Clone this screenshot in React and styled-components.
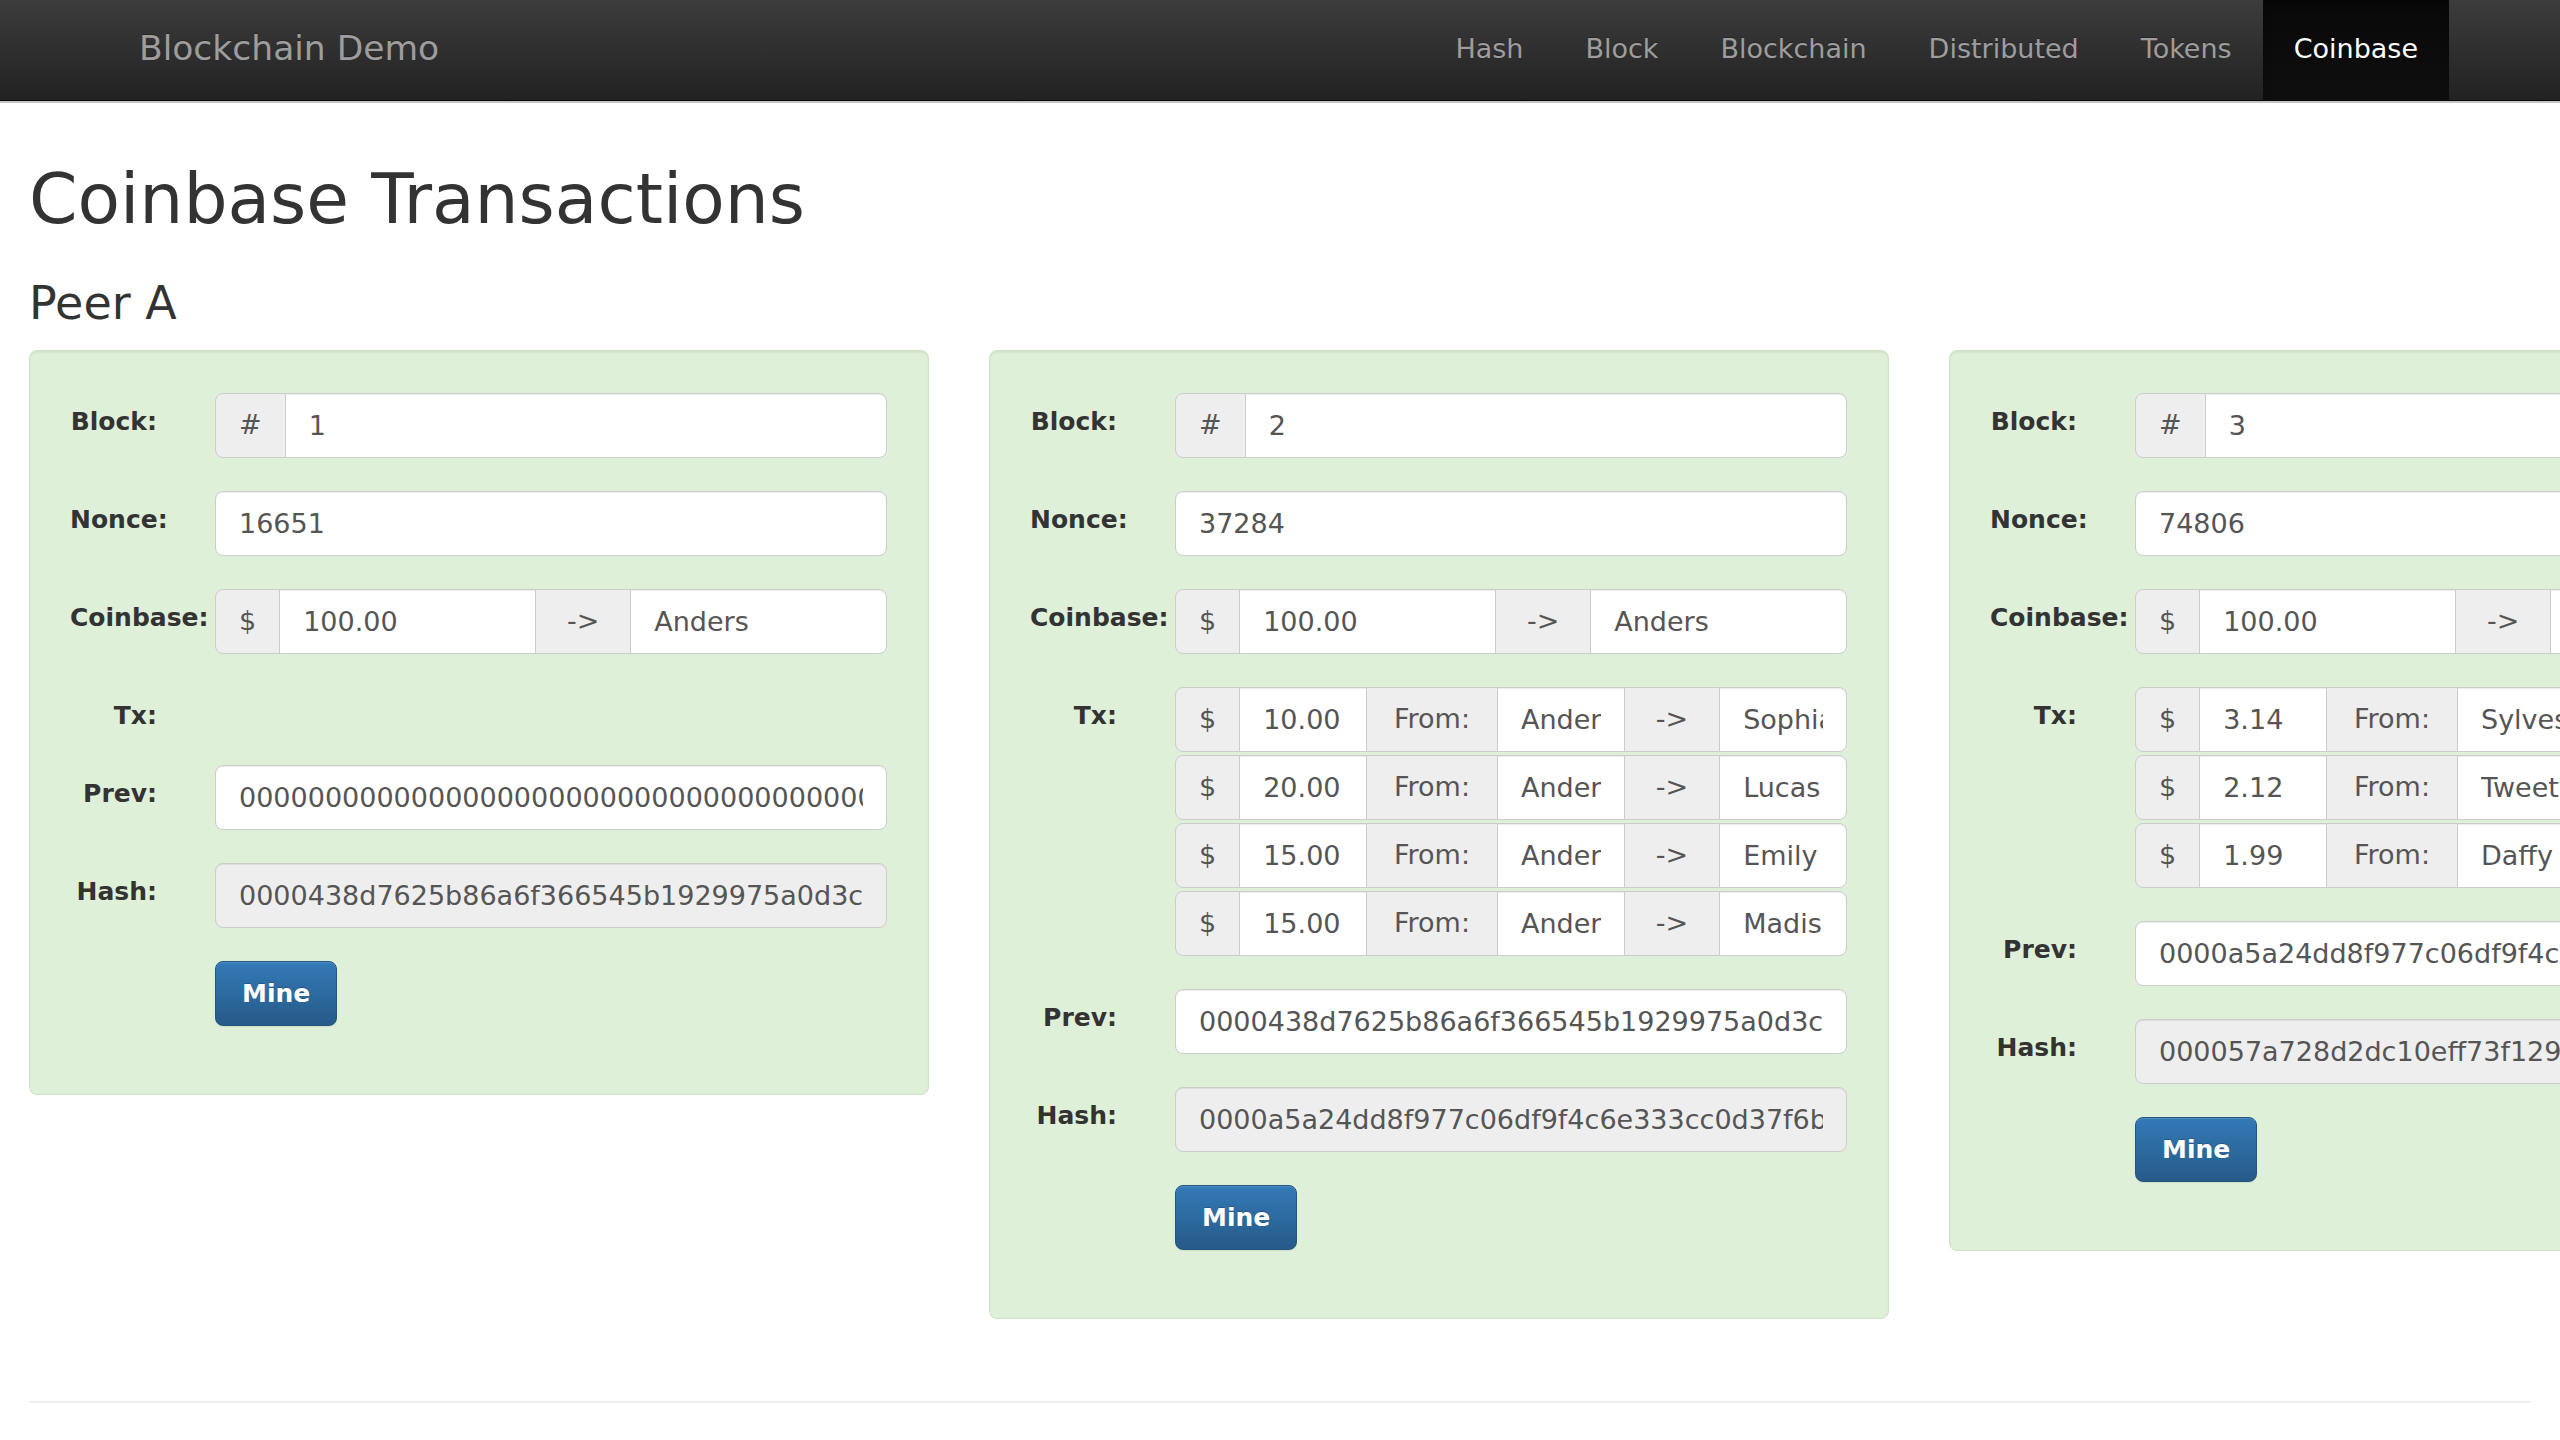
import React from "react";
import styled, { createGlobalStyle } from "styled-components";

const GlobalStyle = createGlobalStyle`
  * {
    box-sizing: border-box;
  }
  body {
    margin: 0;
    background: #fff;
    color: #333;
    font-family: "DejaVu Sans", "Liberation Sans", sans-serif;
    font-size: 27px;
    line-height: 1.43;
    overflow-x: hidden;
  }
`;

const Navbar = styled.nav`
  height: 101px;
  background: linear-gradient(to bottom, #3c3c3c 0%, #222 100%);
  border-bottom: 1px solid #080808;
  box-shadow: 0 2px 0 #c4c4c4;
`;

const NavInner = styled.div`
  display: flex;
  justify-content: space-between;
  height: 100%;
  padding: 0 111px 0 110px;
`;

const Brand = styled.a`
  display: flex;
  align-items: center;
  padding: 0 29px 2px;
  color: #9d9d9d;
  font-size: 34.5px;
  text-decoration: none;
  text-shadow: 0 -1px 0 rgba(0, 0, 0, 0.25);
`;

const NavList = styled.ul`
  display: flex;
  margin: 0;
  padding: 0;
  list-style: none;
`;

const NavItem = styled.li`
  display: flex;
  align-items: center;
  padding: 0 31px 2px;
  color: ${(p) => (p.$active ? "#fff" : "#9d9d9d")};
  background: ${(p) =>
    p.$active ? "linear-gradient(to bottom, #080808 0%, #0f0f0f 100%)" : "none"};
  box-shadow: ${(p) => (p.$active ? "inset 0 3px 9px rgba(0, 0, 0, 0.25)" : "none")};
  text-shadow: 0 -1px 0 rgba(0, 0, 0, 0.25);
  cursor: pointer;
`;

const Main = styled.main`
  padding: 0 29px;
`;

const Title = styled.h1`
  margin: 60px 0 0;
  font-size: 69.5px;
  font-weight: 500;
  line-height: 1.1;
`;

const PeerHeading = styled.h3`
  margin: 41px 0 21px;
  font-size: 46px;
  font-weight: 500;
  line-height: 1.1;
`;

const BlockRow = styled.div`
  display: flex;
  align-items: flex-start;
  gap: 60px;
  margin-right: -29px;
  overflow: hidden;
`;

const Well = styled.form`
  flex: none;
  width: 900px;
  padding: 42px 41px 68px 40px;
  background: #dff0d8;
  border: 1px solid #cfe1c4;
  border-radius: 8px;
  box-shadow: inset 0 2px 2px rgba(0, 0, 0, 0.05);
`;

const FormRow = styled.div`
  display: grid;
  grid-template-columns: 87px minmax(0, 1fr);
  column-gap: 58px;
  margin-bottom: 33px;

  &:last-child {
    margin-bottom: 0;
  }
`;

const Label = styled.label`
  padding-top: 10px;
  font-size: 25px;
  font-weight: bold;
  line-height: 38px;
  text-align: right;
  white-space: nowrap;
  height: 45px;
`;

const Group = styled.div`
  display: flex;
  min-width: 0;
  height: 65px;

  & > * + * {
    margin-left: -1px;
  }
  & > :first-child {
    border-radius: 8px 0 0 8px;
  }
  & > :last-child {
    border-radius: 0 8px 8px 0;
  }
  & > :only-child {
    border-radius: 8px;
  }
`;

const Addon = styled.span`
  flex: none;
  display: flex;
  align-items: center;
  padding: 0 ${(p) => p.$pad || 23}px;
  background: #eee;
  border: 1px solid #ccc;
  color: #555;
  white-space: nowrap;
`;

const Field = styled.input`
  flex: 1 1 0;
  width: 0;
  min-width: 0;
  height: 65px;
  padding: 0 23px;
  border: 1px solid #ccc;
  background: ${(p) => (p.$locked ? "#eee" : "#fff")};
  color: #555;
  font-family: inherit;
  font-size: 27px;
  box-shadow: inset 0 1px 1px rgba(0, 0, 0, 0.075);
  outline: none;
`;

const TxStack = styled.div`
  display: flex;
  flex-direction: column;
  gap: 3px;
  min-width: 0;
  min-height: 45px;
`;

const MineButton = styled.button`
  justify-self: start;
  height: 65px;
  padding: 0 26px;
  border: 1px solid #245580;
  border-radius: 8px;
  background: linear-gradient(to bottom, #337ab7 0%, #265a88 100%);
  color: #fff;
  font-family: inherit;
  font-size: 25px;
  font-weight: bold;
  text-shadow: 0 -1px 0 rgba(0, 0, 0, 0.2);
  box-shadow: inset 0 1px 0 rgba(255, 255, 255, 0.15), 0 1px 1px rgba(0, 0, 0, 0.075);
  cursor: pointer;
`;

const Rule = styled.hr`
  margin: 82px 0 0;
  border: 0;
  border-top: 2px solid #eee;
`;

const ZERO = "0".repeat(64);

const blocks = [
  {
    id: 1,
    nonce: "16651",
    coinbase: { amount: "100.00", to: "Anders" },
    txs: [],
    prev: ZERO,
    hash: "0000438d7625b86a6f366545b1929975a0d3c7e1f0b2a94d8e6c5b3a1f907e2d",
  },
  {
    id: 2,
    nonce: "37284",
    coinbase: { amount: "100.00", to: "Anders" },
    txs: [
      { amount: "10.00", from: "Anders", to: "Sophia" },
      { amount: "20.00", from: "Anders", to: "Lucas" },
      { amount: "15.00", from: "Anders", to: "Emily" },
      { amount: "15.00", from: "Anders", to: "Madison" },
    ],
    prev: "0000438d7625b86a6f366545b1929975a0d3c7e1f0b2a94d8e6c5b3a1f907e2d",
    hash: "0000a5a24dd8f977c06df9f4c6e333cc0d37f6b1e8a45c9d20f7e3b6a18c4d52",
  },
  {
    id: 3,
    nonce: "74806",
    coinbase: { amount: "100.00", to: "Anders" },
    txs: [
      { amount: "3.14", from: "Sylvester", to: "Tweety" },
      { amount: "2.12", from: "Tweety", to: "Daffy" },
      { amount: "1.99", from: "Daffy", to: "Bugs" },
    ],
    prev: "0000a5a24dd8f977c06df9f4c6e333cc0d37f6b1e8a45c9d20f7e3b6a18c4d52",
    hash: "000057a728d2dc10eff73f129b4e6a0c83d1f5e72a9c04b6d8e13f7a25c960eb",
  },
];

const navLinks = ["Hash", "Block", "Blockchain", "Distributed", "Tokens", "Coinbase"];

const TxLine = ({ tx }) => (
  <Group>
    <Addon>$</Addon>
    <Field readOnly value={tx.amount} />
    <Addon $pad={27}>From:</Addon>
    <Field readOnly value={tx.from} />
    <Addon $pad={31}>-&gt;</Addon>
    <Field readOnly value={tx.to} />
  </Group>
);

const BlockCard = ({ block }) => (
  <Well onSubmit={(e) => e.preventDefault()}>
    <FormRow>
      <Label>Block:</Label>
      <Group>
        <Addon>#</Addon>
        <Field readOnly value={block.id} />
      </Group>
    </FormRow>
    <FormRow>
      <Label>Nonce:</Label>
      <Group>
        <Field readOnly value={block.nonce} />
      </Group>
    </FormRow>
    <FormRow>
      <Label>Coinbase:</Label>
      <Group>
        <Addon>$</Addon>
        <Field readOnly value={block.coinbase.amount} />
        <Addon $pad={31}>-&gt;</Addon>
        <Field readOnly value={block.coinbase.to} />
      </Group>
    </FormRow>
    <FormRow>
      <Label>Tx:</Label>
      <TxStack>
        {block.txs.map((tx, i) => (
          <TxLine key={i} tx={tx} />
        ))}
      </TxStack>
    </FormRow>
    <FormRow>
      <Label>Prev:</Label>
      <Group>
        <Field readOnly value={block.prev} />
      </Group>
    </FormRow>
    <FormRow>
      <Label>Hash:</Label>
      <Group>
        <Field readOnly $locked value={block.hash} />
      </Group>
    </FormRow>
    <FormRow>
      <span />
      <MineButton type="button">Mine</MineButton>
    </FormRow>
  </Well>
);

export default function App() {
  return (
    <>
      <GlobalStyle />
      <Navbar>
        <NavInner>
          <Brand href="#">Blockchain Demo</Brand>
          <NavList>
            {navLinks.map((link) => (
              <NavItem key={link} $active={link === "Coinbase"}>
                {link}
              </NavItem>
            ))}
          </NavList>
        </NavInner>
      </Navbar>
      <Main>
        <Title>Coinbase Transactions</Title>
        <PeerHeading>Peer A</PeerHeading>
        <BlockRow>
          {blocks.map((block) => (
            <BlockCard key={block.id} block={block} />
          ))}
        </BlockRow>
        <Rule />
      </Main>
    </>
  );
}
